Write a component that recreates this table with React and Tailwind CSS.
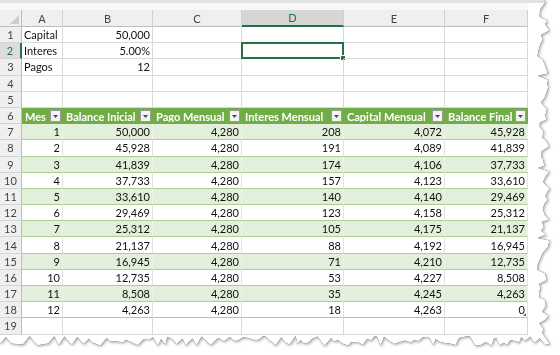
import clsx from "clsx";

const colW = ["w-[41px]", "w-[90px]", "w-[89px]", "w-[102px]", "w-[101px]", "w-[83px]"];
const letters = ["A", "B", "C", "D", "E", "F"];
const heads = ["Mes", "Balance Inicial", "Pago Mensual", "Interes Mensual", "Capital Mensual", "Balance Final"];

const inputs = {
  1: ["Capital", "50,000"],
  2: ["Interes", "5.00%"],
  3: ["Pagos", "12"],
};

const loan = [
  ["1", "50,000", "4,280", "208", "4,072", "45,928"],
  ["2", "45,928", "4,280", "191", "4,089", "41,839"],
  ["3", "41,839", "4,280", "174", "4,106", "37,733"],
  ["4", "37,733", "4,280", "157", "4,123", "33,610"],
  ["5", "33,610", "4,280", "140", "4,140", "29,469"],
  ["6", "29,469", "4,280", "123", "4,158", "25,312"],
  ["7", "25,312", "4,280", "105", "4,175", "21,137"],
  ["8", "21,137", "4,280", "88", "4,192", "16,945"],
  ["9", "16,945", "4,280", "71", "4,210", "12,735"],
  ["10", "12,735", "4,280", "53", "4,227", "8,508"],
  ["11", "8,508", "4,280", "35", "4,245", "4,263"],
  ["12", "4,263", "4,280", "18", "4,263", "0"],
];

// torn paper edge, made up once from a seeded random walk
function tornEdge() {
  let s = 11;
  const r = () => {
    s = (s * 9301 + 49297) % 233280;
    return s / 233280;
  };
  const pts = ["0px 0px", "544px 0px"];
  let y = 2;
  while (y < 338) {
    pts.push(`${537 + r() * 13}px ${y.toFixed(1)}px`);
    y += 2 + r() * 5;
  }
  let x = 550;
  while (x > 0) {
    pts.push(`${x.toFixed(1)}px ${(336 + r() * 10).toFixed(1)}px`);
    x -= 2 + r() * 5;
  }
  pts.push("0px 341px");
  return `polygon(${pts.join(",")})`;
}

const edge = tornEdge();

function RowHead({ n, active }) {
  return (
    <div
      className={clsx(
        "w-[22px] shrink-0 flex items-center justify-center border-b border-b-[#d4d4d4]",
        active
          ? "bg-[#dcdcdc] border-r-2 border-r-[#217346] text-[#217346]"
          : "bg-[#efefef] border-r border-r-[#bdbdbd] text-[#444]"
      )}
    >
      {n}
    </div>
  );
}

function FilterBtn() {
  return (
    <div className="w-[11px] h-[12px] shrink-0 bg-[#f3f3f3] border border-[#9a9a9a] flex items-center justify-center">
      <svg width="5" height="3" viewBox="0 0 5 3">
        <path d="M0 0h5L2.5 3z" fill="#4a4a4a" />
      </svg>
    </div>
  );
}

function PlainRow({ n }) {
  const vals = inputs[n] || [];
  return (
    <div className="flex h-[16.2px]">
      <RowHead n={n} active={n === 2} />
      {colW.map((w, i) => (
        <div
          key={i}
          className={clsx(
            w,
            "shrink-0 relative flex items-center px-[2px] whitespace-nowrap border-r border-b border-[#dadada]",
            i === 0 ? "justify-start" : "justify-end"
          )}
        >
          {vals[i]}
          {n === 2 && i === 3 && (
            <>
              <div className="absolute -top-px -left-px -right-px -bottom-px border-2 border-[#217346]" />
              <div className="absolute -right-[3px] -bottom-[3px] w-[6px] h-[6px] bg-[#217346] border border-white" />
            </>
          )}
        </div>
      ))}
    </div>
  );
}

export default function App() {
  return (
    <div className="w-[560px] h-[355px] bg-white overflow-hidden">
      <div className="[filter:drop-shadow(0.5px_0.5px_0.4px_rgba(0,0,0,0.9))_drop-shadow(1.5px_1.5px_1.5px_rgba(0,0,0,0.35))]">
        <div
          className="w-[560px] h-[355px] bg-white font-[Lato,sans-serif] text-[11px] text-[#111] leading-none"
          style={{ clipPath: edge }}
        >
          <div className="h-[3px] bg-[#e2e2e2]" />
          <div className="h-[7px] bg-[#f7f7f7] w-[528px]" />

          {/* column letters */}
          <div className="flex h-[17px] w-[528px]">
            <div className="w-[22px] shrink-0 relative bg-[#efefef] border-r border-b border-[#bdbdbd]">
              <div className="absolute right-[2px] bottom-[2px] w-0 h-0 border-l-[9px] border-l-transparent border-b-[9px] border-b-[#cdcdcd]" />
            </div>
            {letters.map((l, i) => (
              <div
                key={l}
                className={clsx(
                  colW[i],
                  "shrink-0 flex items-center justify-center border-r border-r-[#d0d0d0]",
                  i === 3
                    ? "bg-[#d6d6d6] border-b-2 border-b-[#217346] text-[#217346]"
                    : "bg-[#efefef] border-b border-b-[#bdbdbd] text-[#444]"
                )}
              >
                {l}
              </div>
            ))}
          </div>

          {[1, 2, 3, 4, 5].map((n) => (
            <PlainRow key={n} n={n} />
          ))}

          {/* table header */}
          <div className="flex h-[16.2px]">
            <RowHead n={6} />
            {heads.map((h, i) => (
              <div
                key={h}
                className={clsx(
                  colW[i],
                  "shrink-0 flex items-center pl-[3px] pr-[2px] bg-[#70ad47] text-white font-bold whitespace-nowrap overflow-hidden"
                )}
              >
                <span className="flex-1 overflow-hidden">{h}</span>
                <FilterBtn />
              </div>
            ))}
          </div>

          {loan.map((row, r) => (
            <div key={r} className="flex h-[16.2px]">
              <RowHead n={r + 7} />
              {row.map((v, i) => (
                <div
                  key={i}
                  className={clsx(
                    colW[i],
                    "shrink-0 relative flex items-center justify-end pr-[2px] border-b border-b-[#a9d08e] border-r",
                    r % 2 === 0 ? "bg-[#e2efda] border-r-[#eaf3e4]" : "bg-white border-r-[#e2e2e2]",
                    i === 5 && "border-r-[#a9d08e]"
                  )}
                >
                  {v}
                  {r === 11 && i === 5 && (
                    <div className="absolute right-[1px] bottom-[1px] w-0 h-0 border-l-[3px] border-l-transparent border-b-[3px] border-b-[#3b5bd6]" />
                  )}
                </div>
              ))}
            </div>
          ))}

          <PlainRow n={19} />
        </div>
      </div>
    </div>
  );
}
